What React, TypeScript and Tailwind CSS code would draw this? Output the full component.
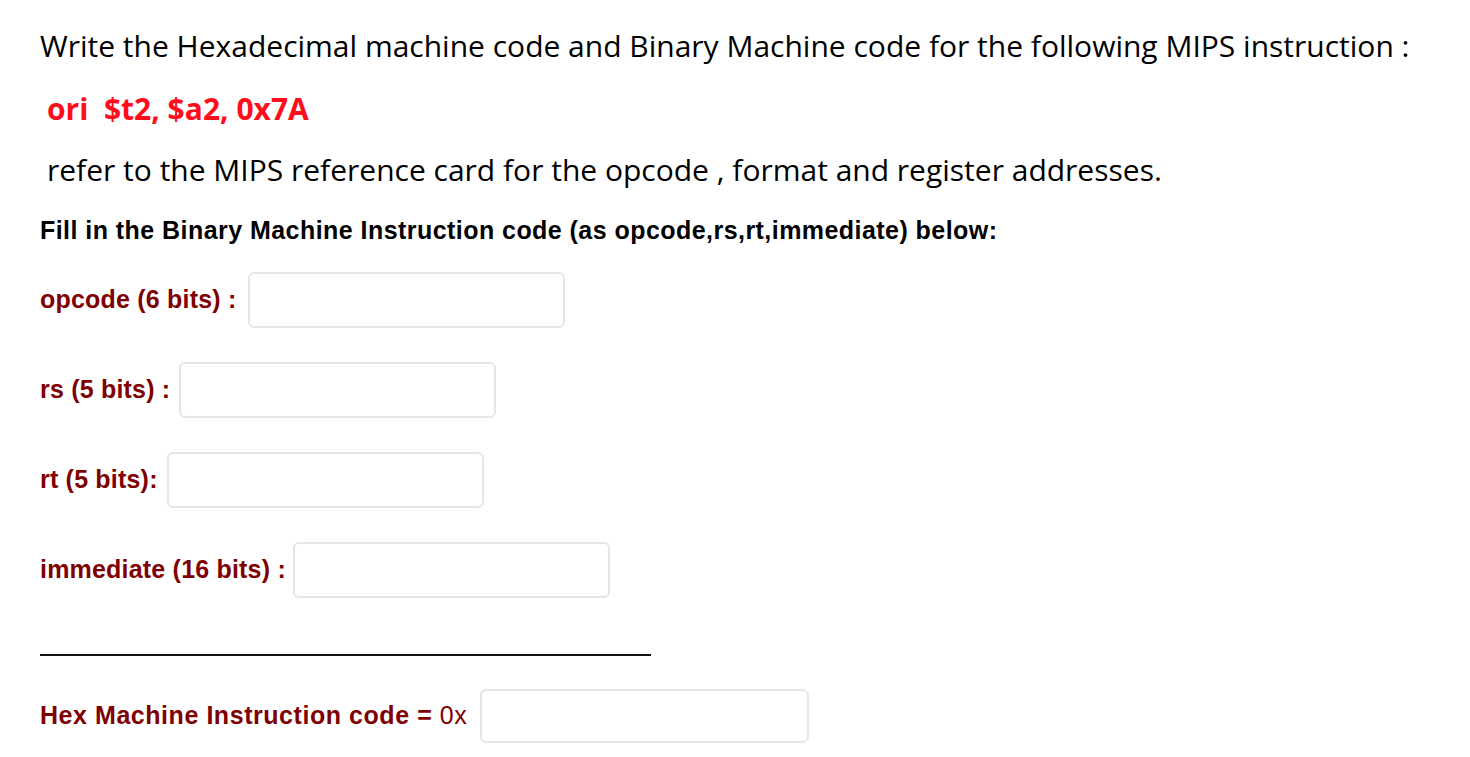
import React from "react";

const labelCls =
  "font-['Liberation_Sans',Arial,sans-serif] font-bold text-[25px] tracking-[0.2px] text-[#7f0000]";
const inputCls =
  "h-[56px] w-[317px] rounded-[6px] border-2 border-[#e6e6e6] bg-white";

export default function App() {
  return (
    <div className="min-h-screen bg-white pl-[40px] pt-[26px] text-black">
      <p className="font-['Open_Sans',sans-serif] text-[30px] leading-[40px]">
        Write the Hexadecimal machine code and Binary Machine code for the following MIPS instruction :
      </p>
      <p className="mt-[23px] pl-[7px] font-['Open_Sans',sans-serif] text-[30px] font-bold leading-[40px] text-[#ff0d1a]">
        ori&nbsp; $t2, $a2, 0x7A
      </p>
      <p className="mt-[21px] pl-[7px] font-['Open_Sans',sans-serif] text-[30px] leading-[40px]">
        refer to the MIPS reference card for the opcode , format and register addresses.
      </p>
      <p className="mt-[25px] font-['Liberation_Sans',Arial,sans-serif] text-[25px] tracking-[0.45px] font-bold leading-[30px]">
        Fill in the Binary Machine Instruction code (as opcode,rs,rt,immediate) below:
      </p>
      <div className="mt-[27px] flex flex-col">
        <div className="flex items-center gap-[12px]">
          <span className={labelCls}>opcode (6 bits) :</span>
          <div className={inputCls} />
        </div>
        <div className="mt-[34px] flex items-center gap-[9px]">
          <span className={labelCls}>rs (5 bits) :</span>
          <div className={inputCls} />
        </div>
        <div className="mt-[34px] flex items-center gap-[9px]">
          <span className={labelCls}>rt (5 bits):</span>
          <div className={inputCls} />
        </div>
        <div className="mt-[34px] flex items-center gap-[7px]">
          <span className={labelCls}>immediate (16 bits) :</span>
          <div className={inputCls} />
        </div>
      </div>
      <div className="mt-[56px] h-[2px] w-[611px] bg-[#111]" />
      <div className="mt-[33px] flex items-center gap-[13px]">
        <span className="font-['Liberation_Sans',Arial,sans-serif] font-bold text-[25px] tracking-[0.55px] text-[#7f0000]">
          Hex Machine Instruction code ={" "}
          <span className="font-normal">0x</span>
        </span>
        <div className="h-[54px] w-[329px] rounded-[6px] border-2 border-[#e6e6e6] bg-white" />
      </div>
    </div>
  );
}
